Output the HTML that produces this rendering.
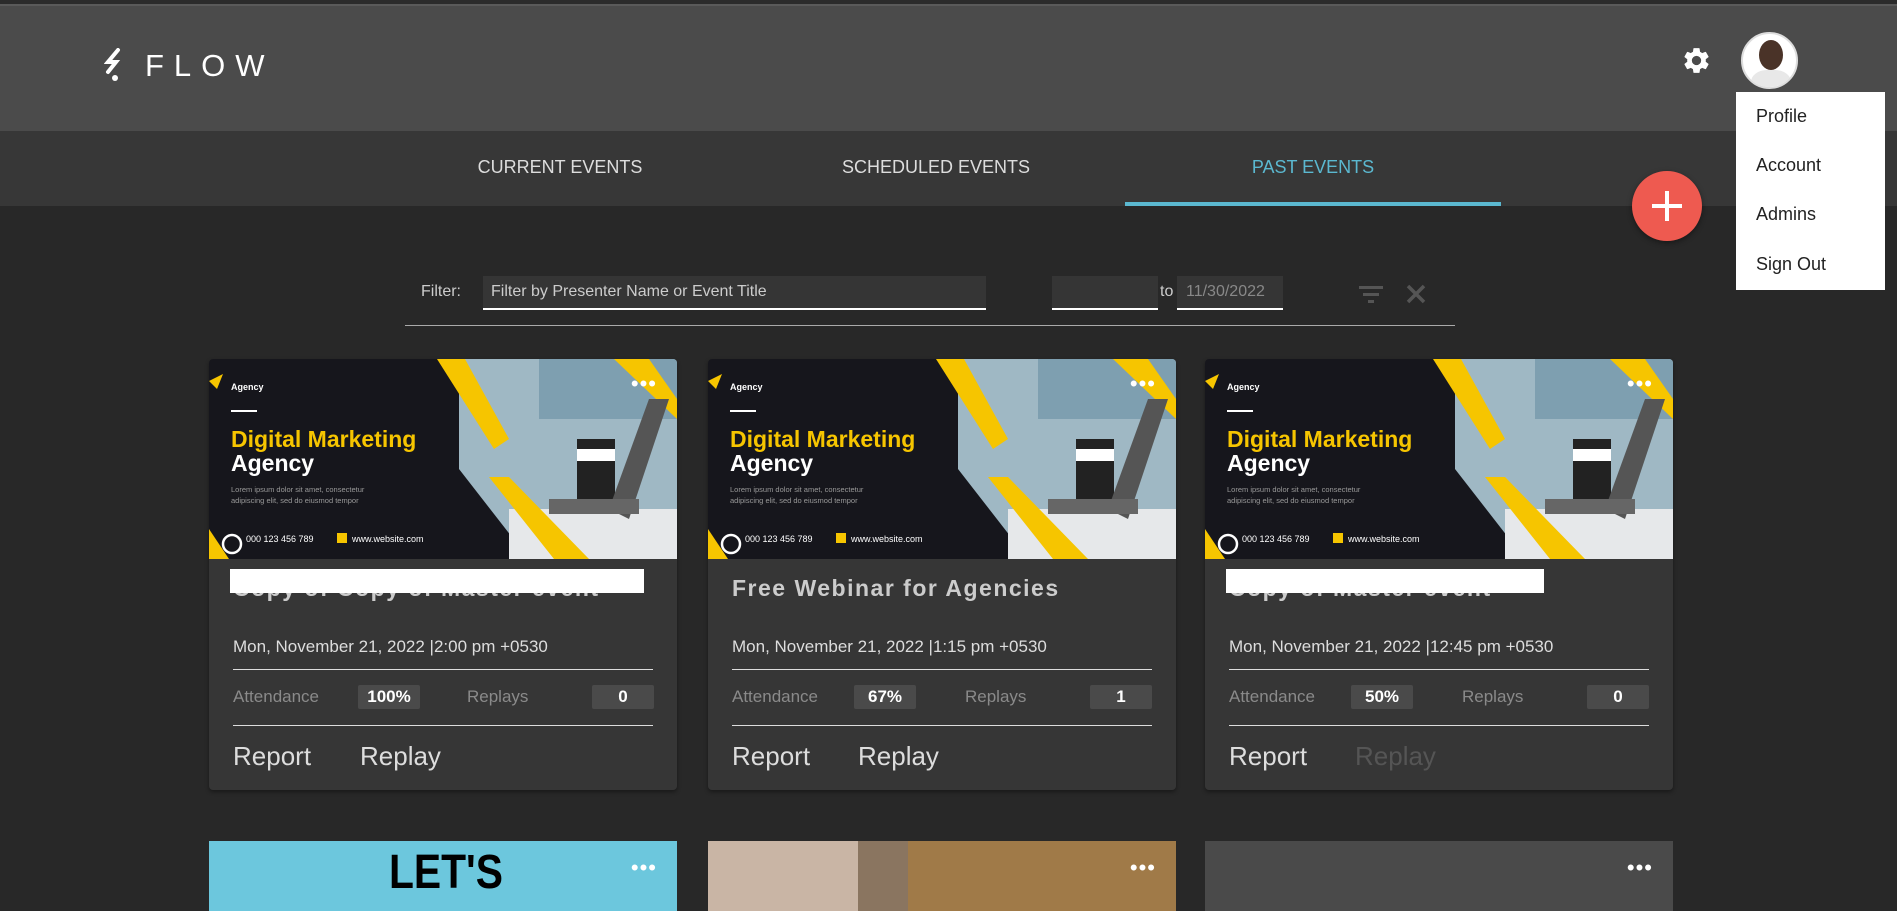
<!DOCTYPE html>
<html><head><meta charset="utf-8"><style>
*{margin:0;padding:0;box-sizing:border-box}
body{width:1897px;height:905px;overflow:hidden;background:#282828;font-family:"Liberation Sans",sans-serif;position:relative}
.a{position:absolute}
.hdr{left:0;top:6px;width:1897px;height:125px;background:#4b4b4b}
.top{left:0;top:0;width:1897px;height:6px;background:#2b2b2b;border-bottom:2px solid #5a5a5a}
.tabs{left:0;top:131px;width:1897px;height:75px;background:#373737}
.tab{top:157px;font-size:18px;color:#ddd;transform:translateX(-50%);white-space:nowrap}
.dd{left:1736px;top:92px;width:149px;height:198px;background:#fff}
.dd div{position:absolute;left:20px;font-size:18px;color:#222}
.card{width:468px;height:431px;background:#363636;border-radius:4px;top:359px;overflow:hidden;box-shadow:0 2px 4px rgba(0,0,0,.4)}
.img{position:absolute;left:0;top:0;width:468px;height:200px}
.date{position:absolute;left:24px;top:278px;font-size:17px;color:#ddd}
.ln{position:absolute;left:24px;width:420px;height:1px;background:#ddd}
.lab{position:absolute;top:328px;font-size:17px;color:#8a8a8a}
.bad{position:absolute;top:326px;height:24px;background:#4a4a4a;color:#fff;font-weight:bold;font-size:17px;text-align:center;line-height:24px;border-radius:2px}
.btn{position:absolute;top:382px;font-size:26px;color:#ddd}
.ttl{position:absolute;left:24px;top:216px;font-size:23px;font-weight:bold;color:#ccc;letter-spacing:1.5px;white-space:nowrap}
.red{position:absolute;left:21px;top:210px;height:24px;background:#fff}
.dots{position:absolute;right:20px;top:20px;color:#fff;font-size:22px;letter-spacing:1px;line-height:10px}
.c2{top:841px;width:468px;height:70px}
</style></head><body>
<div class="a top"></div>
<div class="a hdr"></div>
<svg class="a" style="left:104px;top:48px" width="24" height="34" viewBox="0 0 24 34"><path d="M14 2 L4 14 L12 14 L4 24" stroke="#fff" stroke-width="4" fill="none" stroke-linecap="round"/><circle cx="11" cy="30" r="3" fill="#fff"/></svg>
<div class="a" style="left:145px;top:48px;font-size:31px;color:#fff;letter-spacing:10px;font-weight:400">FLOW</div>
<svg class="a" style="left:1681px;top:45px" width="31" height="31" viewBox="0 0 24 24"><path fill="#fff" d="M19.14 12.94c.04-.3.06-.61.06-.94s-.02-.64-.07-.94l2.03-1.58a.49.49 0 0 0 .12-.61l-1.92-3.32a.49.49 0 0 0-.59-.22l-2.39.96c-.5-.38-1.03-.7-1.62-.94l-.36-2.54a.48.48 0 0 0-.48-.41h-3.84c-.24 0-.43.17-.47.41l-.36 2.54c-.59.24-1.13.57-1.62.94l-2.39-.96a.48.48 0 0 0-.59.22L2.74 8.87c-.12.21-.08.47.12.61l2.03 1.58c-.05.3-.09.63-.09.94s.02.64.07.94l-2.03 1.58a.49.49 0 0 0-.12.61l1.92 3.32c.12.22.37.29.59.22l2.39-.96c.5.38 1.03.7 1.62.94l.36 2.54c.05.24.24.41.48.41h3.84c.24 0 .44-.17.47-.41l.36-2.54c.59-.24 1.13-.56 1.62-.94l2.39.96c.22.08.47 0 .59-.22l1.92-3.32c.12-.22.07-.47-.12-.61l-2.01-1.58zM12 15.6A3.6 3.6 0 1 1 12 8.4a3.6 3.6 0 0 1 0 7.2z"/></svg>
<div class="a" style="left:1741px;top:32px;width:57px;height:57px;border-radius:50%;background:#fff;overflow:hidden;border:2px solid #ddd"><div style="position:absolute;left:16px;top:6px;width:24px;height:30px;border-radius:50%;background:#4a3328"></div><div style="position:absolute;left:8px;top:36px;width:40px;height:30px;border-radius:40% 40% 0 0;background:#e8e8e8"></div></div>
<div class="a tabs"></div>
<div class="a tab" style="left:560px">CURRENT EVENTS</div>
<div class="a tab" style="left:936px">SCHEDULED EVENTS</div>
<div class="a tab" style="left:1313px;color:#5bb8d0">PAST EVENTS</div>
<div class="a" style="left:1125px;top:202px;width:376px;height:4px;background:#5bb8d0"></div>
<div class="a" style="left:1632px;top:171px;width:70px;height:70px;border-radius:50%;background:#ee5a50;box-shadow:0 2px 6px rgba(0,0,0,.4)"><div style="position:absolute;left:33px;top:20px;width:4px;height:30px;background:#fff"></div><div style="position:absolute;left:20px;top:33px;width:30px;height:4px;background:#fff"></div></div>
<div class="a dd"><div style="top:14px">Profile</div><div style="top:63px">Account</div><div style="top:112px">Admins</div><div style="top:162px">Sign Out</div></div>

<div class="a" style="left:421px;top:283px;font-size:16px;color:#ccc">Filter:</div>
<div class="a" style="left:483px;top:276px;width:503px;height:34px;background:#353535;border-bottom:2px solid #fff;color:#ccc;font-size:16px;padding:7px 8px">Filter by Presenter Name or Event Title</div>
<div class="a" style="left:1052px;top:276px;width:106px;height:34px;background:#353535;border-bottom:2px solid #fff"></div>
<div class="a" style="left:1160px;top:283px;font-size:16px;color:#ccc">to</div>
<div class="a" style="left:1177px;top:276px;width:106px;height:34px;background:#353535;border-bottom:2px solid #fff;color:#888;font-size:16px;padding:7px 9px">11/30/2022</div>
<svg class="a" style="left:1358px;top:284px" width="26" height="20" viewBox="0 0 26 20"><rect x="1" y="2" width="24" height="3" fill="#555"/><rect x="5" y="9" width="16" height="3" fill="#555"/><rect x="10" y="16" width="6" height="3" fill="#555"/></svg>
<svg class="a" style="left:1405px;top:283px" width="22" height="22" viewBox="0 0 22 22"><path d="M3 3L19 19M19 3L3 19" stroke="#555" stroke-width="3.5"/></svg>
<div class="a" style="left:405px;top:325px;width:1050px;height:1px;background:#aaa"></div>

<!-- cards -->
<svg width="0" height="0" style="position:absolute"><defs>
<g id="ban">
<rect width="468" height="200" fill="#16161c"/>
<polygon points="250,0 468,0 468,200 320,200 250,110" fill="#9fb8c4"/>
<rect x="330" y="0" width="138" height="60" fill="#7e9fb0"/>
<rect x="300" y="150" width="168" height="50" fill="#e6e8ea"/>
<polygon points="228,0 256,0 300,80 285,90" fill="#f6c500"/>
<polygon points="280,118 300,118 380,200 345,200" fill="#f6c500"/>
<polygon points="405,0 440,0 468,40 468,60" fill="#f6c500"/>
<polygon points="0,170 0,200 20,200" fill="#f6c500"/>
<rect x="368" y="80" width="38" height="65" fill="#222"/><rect x="368" y="90" width="38" height="12" fill="#fff"/>
<polygon points="400,150 440,40 460,40 420,160" fill="#555"/>
<rect x="340" y="140" width="90" height="15" fill="#666"/>
<text x="22" y="31" font-size="9" fill="#fff" font-weight="bold" font-family="Liberation Sans">Agency</text>
<polygon points="0,22 14,15 8,30" fill="#f6c500"/>
<rect x="22" y="51" width="26" height="2" fill="#fff"/>
<text x="22" y="88" font-size="23" fill="#f6c500" font-weight="bold" font-family="Liberation Sans">Digital Marketing</text>
<text x="22" y="112" font-size="23" fill="#fff" font-weight="bold" font-family="Liberation Sans">Agency</text>
<text x="22" y="133" font-size="7.5" fill="#999" font-family="Liberation Sans">Lorem ipsum dolor sit amet, consectetur</text>
<text x="22" y="144" font-size="7.5" fill="#999" font-family="Liberation Sans">adipiscing elit, sed do eiusmod tempor</text>
<text x="37" y="183" font-size="9" fill="#fff" font-family="Liberation Sans">000 123 456 789</text>
<rect x="128" y="174" width="10" height="10" fill="#f6c500"/>
<text x="143" y="183" font-size="9" fill="#fff" font-family="Liberation Sans">www.website.com</text>
<circle cx="23" cy="185" r="9" fill="none" stroke="#fff" stroke-width="2.5"/>
</g></defs></svg>

<div class="a card" style="left:209px"><svg class="img" viewBox="0 0 468 200"><use href="#ban"/></svg><div class="dots">•••</div>
<div class="ttl">Copy of Copy of Master event</div><div class="red" style="width:414px"></div>
<div class="date">Mon, November 21, 2022 |2:00 pm +0530</div><div class="ln" style="top:310px"></div>
<div class="lab" style="left:24px">Attendance</div><div class="bad" style="left:149px;width:62px">100%</div>
<div class="lab" style="left:258px">Replays</div><div class="bad" style="left:383px;width:62px">0</div>
<div class="ln" style="top:366px"></div>
<div class="btn" style="left:24px">Report</div><div class="btn" style="left:151px">Replay</div></div>

<div class="a card" style="left:708px"><svg class="img" viewBox="0 0 468 200"><use href="#ban"/></svg><div class="dots">•••</div>
<div class="ttl">Free Webinar for Agencies</div>
<div class="date">Mon, November 21, 2022 |1:15 pm +0530</div><div class="ln" style="top:310px"></div>
<div class="lab" style="left:24px">Attendance</div><div class="bad" style="left:146px;width:62px">67%</div>
<div class="lab" style="left:257px">Replays</div><div class="bad" style="left:382px;width:62px">1</div>
<div class="ln" style="top:366px"></div>
<div class="btn" style="left:24px">Report</div><div class="btn" style="left:150px">Replay</div></div>

<div class="a card" style="left:1205px"><svg class="img" viewBox="0 0 468 200"><use href="#ban"/></svg><div class="dots">•••</div>
<div class="ttl">Copy of Master event</div><div class="red" style="width:318px"></div>
<div class="date">Mon, November 21, 2022 |12:45 pm +0530</div><div class="ln" style="top:310px"></div>
<div class="lab" style="left:24px">Attendance</div><div class="bad" style="left:146px;width:62px">50%</div>
<div class="lab" style="left:257px">Replays</div><div class="bad" style="left:382px;width:62px">0</div>
<div class="ln" style="top:366px"></div>
<div class="btn" style="left:24px">Report</div><div class="btn" style="left:150px;color:#555">Replay</div></div>

<div class="a c2" style="left:209px;background:#6cc7dd;overflow:hidden"><div style="position:absolute;left:180px;top:4px;font-size:48px;font-weight:bold;color:#000;transform:scaleX(.85);transform-origin:left">LET'S</div><div class="dots" style="top:22px">•••</div></div>
<div class="a c2" style="left:708px;background:#8a7560;overflow:hidden"><div style="position:absolute;left:0;top:0;width:150px;height:70px;background:#c9b5a5"></div><div style="position:absolute;left:200px;top:0;width:268px;height:70px;background:#a07a48"></div><div class="dots" style="top:22px">•••</div></div>
<div class="a c2" style="left:1205px;background:#4a4a4a"><div class="dots" style="top:22px">•••</div></div>
</body></html>
